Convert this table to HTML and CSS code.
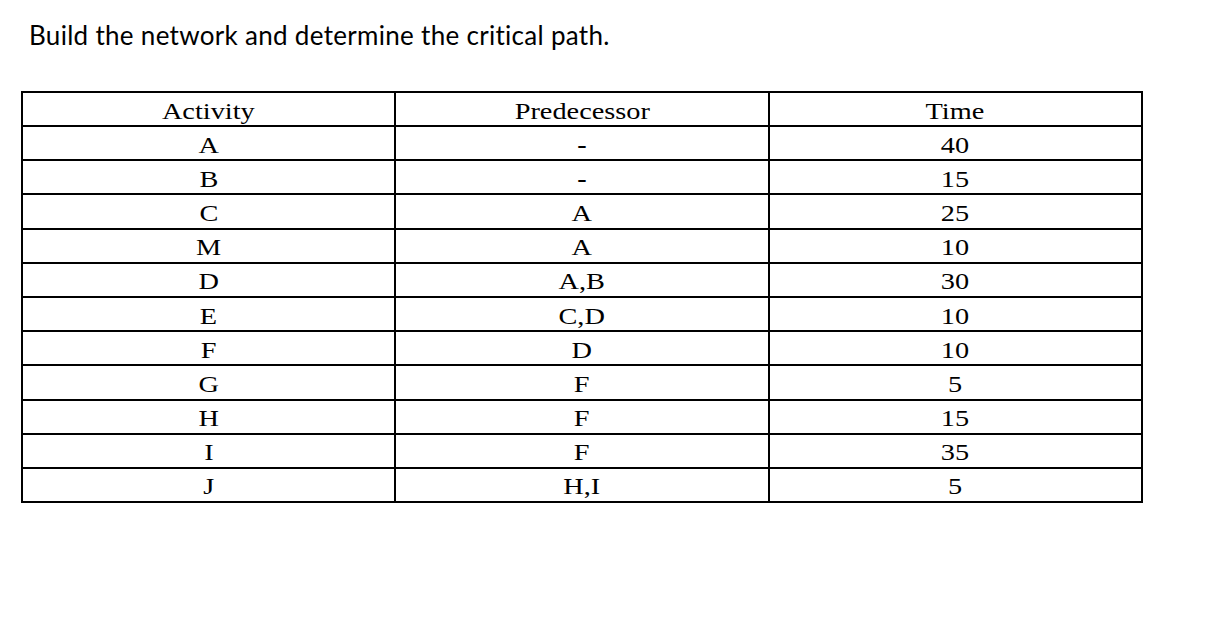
FILE: index.html
```html
<!DOCTYPE html>
<html lang="en">
<head>
<meta charset="utf-8">
<title>Critical path</title>
<link rel="stylesheet" href="styles.css">
</head>
<body>
<div class="page">
  <p class="question">Build the network and determine the critical path.</p>
  <table class="activities">
    <thead>
      <tr><th><span>Activity</span></th><th><span>Predecessor</span></th><th><span>Time</span></th></tr>
    </thead>
    <tbody>
      <tr><td><span>A</span></td><td class="dash"><span>-</span></td><td><span>40</span></td></tr>
      <tr><td><span>B</span></td><td class="dash"><span>-</span></td><td><span>15</span></td></tr>
      <tr><td><span>C</span></td><td><span>A</span></td><td><span>25</span></td></tr>
      <tr><td><span>M</span></td><td><span>A</span></td><td><span>10</span></td></tr>
      <tr><td><span>D</span></td><td><span>A,B</span></td><td><span>30</span></td></tr>
      <tr><td><span>E</span></td><td><span>C,D</span></td><td><span>10</span></td></tr>
      <tr><td><span>F</span></td><td><span>D</span></td><td><span>10</span></td></tr>
      <tr><td><span>G</span></td><td><span>F</span></td><td><span>5</span></td></tr>
      <tr><td><span>H</span></td><td><span>F</span></td><td><span>15</span></td></tr>
      <tr><td><span>I</span></td><td><span>F</span></td><td><span>35</span></td></tr>
      <tr><td><span>J</span></td><td><span>H,I</span></td><td><span>5</span></td></tr>
    </tbody>
  </table>
</div>
</body>
</html>
```

FILE: styles.css
```css
html, body {
  margin: 0;
  padding: 0;
  background: #ffffff;
}

.page {
  padding: 16px 0 0 21px;
}

.question {
  margin: 0 0 0 8px;
  font-family: Lato, "Liberation Sans", sans-serif;
  font-size: 26px;
  letter-spacing: 0.3px;
  line-height: 38px;
  color: #000000;
}

.activities {
  margin-top: 37px;
  width: 1122px;
  border-collapse: collapse;
  table-layout: fixed;
  font-family: "Liberation Serif", "Times New Roman", serif;
  font-size: 24px;
  color: #000000;
}

.activities th,
.activities td {
  border: 2px solid #000000;
  padding: 3px 0 0 0;
  height: 29.2px;
  line-height: 26px;
  text-align: center;
  vertical-align: middle;
  font-weight: normal;
}

.activities th {
  height: 29px;
}

.activities span {
  display: inline-block;
  transform: scaleX(1.18);
}

.activities .dash {
  font-weight: bold;
}
```
